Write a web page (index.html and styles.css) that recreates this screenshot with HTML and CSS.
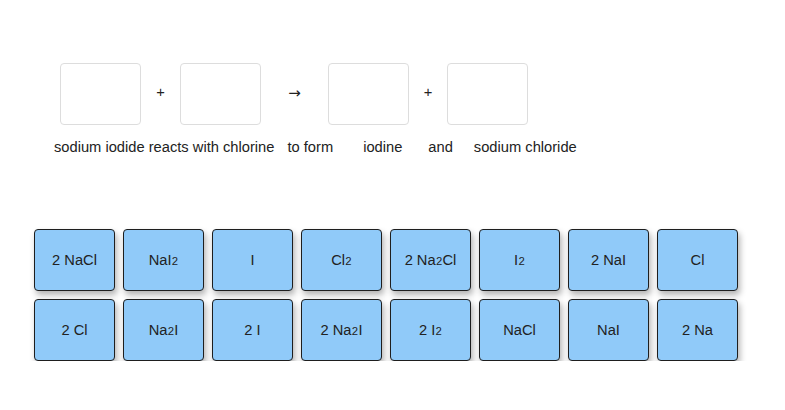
FILE: index.html
```html
<!DOCTYPE html>
<html>
<head>
<meta charset="utf-8">
<link rel="stylesheet" href="styles.css">
</head>
<body>
<div class="page">
  <div class="equation">
    <div class="slot"></div>
    <div class="op">+</div>
    <div class="slot"></div>
    <div class="op arrow">→</div>
    <div class="slot"></div>
    <div class="op op-b">+</div>
    <div class="slot"></div>
  </div>
  <div class="labels">
    <span class="lab l1">sodium iodide reacts with chlorine</span>
    <span class="lab l2">to form</span>
    <span class="lab l3">iodine</span>
    <span class="lab l4">and</span>
    <span class="lab l5">sodium chloride</span>
  </div>
  <div class="tiles">
    <div class="tile">2 NaCl</div>
    <div class="tile">NaI<span class="sub">₂</span></div>
    <div class="tile">I</div>
    <div class="tile">Cl<span class="sub">₂</span></div>
    <div class="tile">2 Na<span class="sub">₂</span>Cl</div>
    <div class="tile">I<span class="sub">₂</span></div>
    <div class="tile">2 NaI</div>
    <div class="tile">Cl</div>
    <div class="tile">2 Cl</div>
    <div class="tile">Na<span class="sub">₂</span>I</div>
    <div class="tile">2 I</div>
    <div class="tile">2 Na<span class="sub">₂</span>I</div>
    <div class="tile">2 I<span class="sub">₂</span></div>
    <div class="tile">NaCl</div>
    <div class="tile">NaI</div>
    <div class="tile">2 Na</div>
  </div>
</div>
</body>
</html>
```
FILE: styles.css
```css
html, body {
  margin: 0;
  padding: 0;
  background: #ffffff;
}
body {
  font-family: "Liberation Sans", Arial, sans-serif;
  font-size: 14.7px;
  color: #222222;
}
.page {
  padding-top: 63px;
}
.equation {
  display: flex;
  align-items: center;
  padding-left: 60px;
}
.slot {
  box-sizing: border-box;
  width: 81px;
  height: 62px;
  border: 1px solid #dddddd;
  border-radius: 4px;
  background: #ffffff;
}
.op {
  width: 39px;
  text-align: center;
  color: #222;
  line-height: 17px;
  padding-bottom: 4px;
}
.op-b {
  width: 38px;
}
.arrow {
  width: 67px;
  font-family: "DejaVu Sans", sans-serif;
  font-size: 15px;
  padding-bottom: 2px;
}
.labels {
  display: flex;
  padding-left: 54px;
  margin-top: 14px;
  line-height: 17px;
  color: #222;
}
.l2 { margin-left: 13px; }
.l3 { margin-left: 30px; }
.l4 { margin-left: 26px; }
.l5 { margin-left: 21px; }
.tiles {
  display: grid;
  grid-template-columns: repeat(8, 81px);
  grid-auto-rows: 62px;
  gap: 8px;
  margin-top: 73px;
  padding-left: 34px;
}
.tile {
  box-sizing: border-box;
  display: flex;
  align-items: center;
  justify-content: center;
  background: #90caf9;
  border: 1px solid #1e1e1e;
  border-radius: 4px;
  box-shadow: 2px 4px 6px rgba(0, 0, 0, 0.3);
  color: #222;
  line-height: 17px;
  padding-top: 1px;
}
.sub {
  display: inline-block;
  font-size: 1.2em;
  line-height: 1;
  position: relative;
  top: -3px;
}
```
